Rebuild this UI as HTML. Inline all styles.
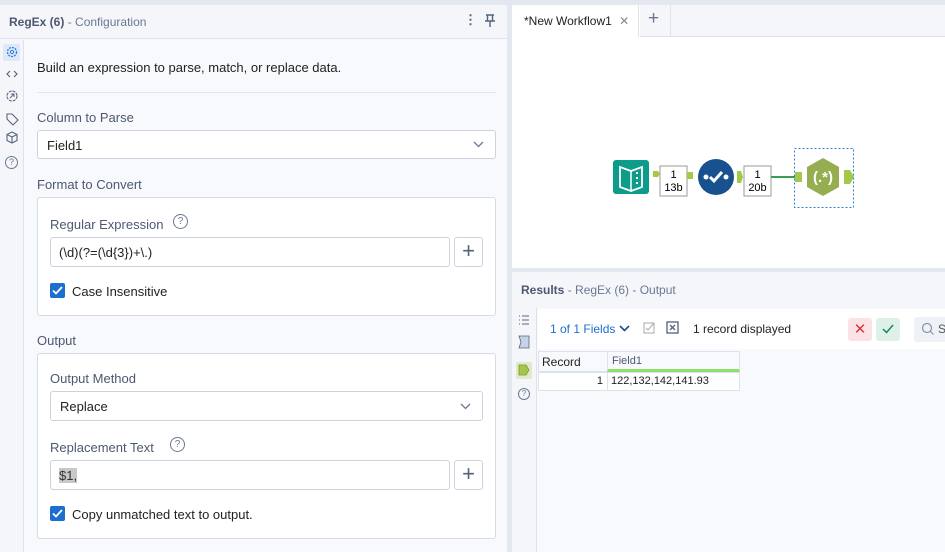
<!DOCTYPE html>
<html><head><meta charset="utf-8"><style>
*{box-sizing:border-box;margin:0;padding:0}
body{width:945px;height:552px;overflow:hidden;background:#e3e8f0;font-family:"Liberation Sans",sans-serif;position:relative;color:#333}
.a{position:absolute}
.lbl{font-size:13px;color:#4d5870}
.inp{background:#fff;border:1px solid #cdd3de;border-radius:3px;font-size:13px;color:#222}
.chk{width:15px;height:15px;background:#1c6fcf;border-radius:2px}
.help{width:15px;height:15px;border:1.3px solid #6b7894;border-radius:50%;font-size:10px;color:#6b7894;text-align:center;line-height:13px}
</style></head><body>
<div class="a" style="left:0;top:5px;width:507px;height:547px;background:#f7f9fd"></div>
<div class="a" style="left:0;top:5px;width:507px;height:34px;background:#f4f6fa;border-bottom:1px solid #dde3ec"></div>
<div class="a" style="left:9px;top:15px;font-size:12px;color:#4d5870"><b style="font-weight:600">RegEx (6)</b> <span style="color:#6b7894">- Configuration</span></div>
<div class="a" style="left:464px;top:12px;font-size:13px;color:#55607a;font-weight:bold">⋮</div>
<svg class="a" style="left:484px;top:14px" width="12" height="14" viewBox="0 0 12 14"><path d="M2 1h8M3.5 1v6M8.5 1v6M1 7h10M6 7v6" stroke="#55607a" stroke-width="1.4" fill="none"/></svg>
<div class="a" style="left:0;top:40px;width:24px;height:512px;background:#f4f6fa;border-right:1px solid #dde3ec"></div>
<div class="a" style="left:3px;top:44px;width:17px;height:17px;background:#dfe8f8;border-radius:2px"></div>
<svg class="a" style="left:5px;top:46px" width="14" height="100" viewBox="0 0 14 100">
<circle cx="7" cy="6" r="4.5" stroke="#2f7be0" stroke-width="1.3" fill="none" stroke-dasharray="2 1"/><circle cx="7" cy="6" r="1.6" stroke="#2f7be0" fill="none"/>
<path d="M5 25l-3 3 3 3M9 25l3 3-3 3" stroke="#5a6580" stroke-width="1.2" fill="none"/>
<circle cx="7" cy="50" r="5" stroke="#5a6580" stroke-width="1.1" fill="none" stroke-dasharray="3 1"/><path d="M5 52l4-4M6 48h3v3" stroke="#5a6580" fill="none"/>
<path d="M2 68v5l6 6 5-5-6-6z" stroke="#5a6580" stroke-width="1.1" fill="none"/>
<path d="M7 86l5 2.5v6L7 97l-5-2.5v-6z M2 88.5l5 2.5 5-2.5M7 91v6" stroke="#5a6580" stroke-width="1.1" fill="none"/>
</svg>
<div class="a help" style="left:5px;top:156px;width:13px;height:13px;font-size:9px;line-height:11px">?</div>
<div class="a" style="left:37px;top:60px;font-size:13px;color:#222">Build an expression to parse, match, or replace data.</div>
<div class="a" style="left:37px;top:92px;width:459px;height:1px;background:#e2e6ee"></div>
<div class="a lbl" style="left:37px;top:110px">Column to Parse</div>
<div class="a inp" style="left:37px;top:130px;width:459px;height:29px;padding:7px 9px">Field1</div>
<svg class="a" style="left:473px;top:141px" width="11" height="7"><path d="M1 1l4.5 4.5L10 1" stroke="#6b7894" stroke-width="1.3" fill="none"/></svg>
<div class="a lbl" style="left:37px;top:177px">Format to Convert</div>
<div class="a" style="left:37px;top:197px;width:459px;height:119px;background:#fff;border:1px solid #d6dce6;border-radius:3px"></div>
<div class="a lbl" style="left:50px;top:217px">Regular Expression</div>
<div class="a help" style="left:173px;top:214px">?</div>
<div class="a inp" style="left:50px;top:237px;width:400px;height:30px;padding:7px 8px">(\d)(?=(\d{3})+\.)</div>
<div class="a inp" style="left:454px;top:237px;width:29px;height:30px;text-align:center;font-size:22px;line-height:26px;color:#55607a">+</div>
<div class="a chk" style="left:50px;top:283px"></div>
<svg class="a" style="left:52px;top:286px" width="11" height="9"><path d="M1 4.5l3 3L10 1" stroke="#fff" stroke-width="1.8" fill="none"/></svg>
<div class="a" style="left:72px;top:284px;font-size:13px;color:#222">Case Insensitive</div>
<div class="a lbl" style="left:37px;top:333px">Output</div>
<div class="a" style="left:37px;top:353px;width:459px;height:186px;background:#fff;border:1px solid #d6dce6;border-radius:3px"></div>
<div class="a lbl" style="left:50px;top:371px">Output Method</div>
<div class="a inp" style="left:50px;top:391px;width:433px;height:30px;padding:7px 9px">Replace</div>
<svg class="a" style="left:460px;top:403px" width="11" height="7"><path d="M1 1l4.5 4.5L10 1" stroke="#6b7894" stroke-width="1.3" fill="none"/></svg>
<div class="a lbl" style="left:50px;top:440px">Replacement Text</div>
<div class="a help" style="left:170px;top:437px">?</div>
<div class="a inp" style="left:50px;top:460px;width:400px;height:30px;padding:7px 8px"><span style="background:#c8c8c8;color:#333">$1,</span></div>
<div class="a inp" style="left:454px;top:460px;width:29px;height:30px;text-align:center;font-size:22px;line-height:26px;color:#55607a">+</div>
<div class="a chk" style="left:50px;top:506px"></div>
<svg class="a" style="left:52px;top:509px" width="11" height="9"><path d="M1 4.5l3 3L10 1" stroke="#fff" stroke-width="1.8" fill="none"/></svg>
<div class="a" style="left:72px;top:507px;font-size:13px;color:#222">Copy unmatched text to output.</div>

<div class="a" style="left:512px;top:5px;width:433px;height:263px;background:#fff"></div>
<div class="a" style="left:640px;top:5px;width:305px;height:32px;background:#f4f6fa;border-bottom:1px solid #dde3ec"></div>
<div class="a" style="left:638px;top:5px;width:33px;height:32px;border-right:1px solid #dde3ec;border-left:1px solid #dde3ec"></div>
<div class="a" style="left:524px;top:14px;font-size:12px;color:#222">*New Workflow1 <span style="color:#888;margin-left:4px">✕</span></div>
<div class="a" style="left:648px;top:8px;font-size:19px;color:#6b7894">+</div>
<svg class="a" style="left:610px;top:148px" width="250" height="60" viewBox="0 0 250 60">
<rect x="3" y="12" width="36" height="34" rx="3" fill="#0e9c8a"/>
<path d="M10 19v20l11 4 11-4V19l-11 4z" stroke="#fff" stroke-width="1.8" fill="none"/><path d="M21 23v20" stroke="#fff" stroke-width="1.5"/><path d="M27 24v2M27 29v2M27 34v2" stroke="#fff" stroke-width="2"/>
<path d="M43 23h5l2 3-2 3h-5z" fill="#a5c84a"/>
<rect x="50" y="18" width="27" height="30" fill="#fff" stroke="#999"/>
<text x="63.5" y="30" font-size="11" text-anchor="middle" font-family="Liberation Sans">1</text><text x="63.5" y="43" font-size="11" text-anchor="middle" font-family="Liberation Sans">13b</text>
<rect x="77" y="24" width="6" height="7" fill="#a5c84a"/>
<circle cx="106" cy="29" r="18" fill="#17518f"/>
<circle cx="96" cy="29" r="2.5" fill="#fff"/><circle cx="116" cy="29" r="2.5" fill="#fff"/><path d="M100 29l4 4 8-9" stroke="#fff" stroke-width="3" fill="none"/>
<path d="M127 23h4l2 6-2 6h-4z" fill="#a5c84a"/>
<rect x="134" y="18" width="27" height="30" fill="#fff" stroke="#999"/>
<text x="147.5" y="30" font-size="11" text-anchor="middle" font-family="Liberation Sans">1</text><text x="147.5" y="43" font-size="11" text-anchor="middle" font-family="Liberation Sans">20b</text>
<path d="M161 29h25" stroke="#3a9d55" stroke-width="2"/>
<rect x="184.5" y="0.5" width="59" height="59" fill="none" stroke="#2a7fd4" stroke-dasharray="2 2"/>
<rect x="185" y="24" width="7" height="10" fill="#a5c84a"/>
<path d="M213 10l16 9v20l-16 9-16-9V19z" fill="#96ad50"/>
<text x="213" y="34" font-size="15" font-weight="bold" fill="#fff" text-anchor="middle" font-family="Liberation Sans">(.*)</text>
<path d="M234 22h6l4 7-4 7h-6z" fill="#a5c84a"/>
</svg>

<div class="a" style="left:512px;top:272px;width:433px;height:36px;background:#f4f6fa"></div>
<div class="a" style="left:521px;top:283px;font-size:12px;color:#6b7894"><b style="color:#4d5870;font-weight:600">Results</b> - RegEx (6) - Output</div>
<div class="a" style="left:512px;top:308px;width:25px;height:244px;background:#f4f6fa;border-right:1px solid #dde3ec"></div>
<div class="a" style="left:537px;top:308px;width:408px;height:244px;background:#f7f9fd"></div>
<div class="a" style="left:538px;top:309px;width:407px;height:40px;background:#fff"></div>
<svg class="a" style="left:516px;top:314px" width="16" height="90" viewBox="0 0 16 90">
<path d="M3 2h1M6 2h7M3 6h1M6 6h7M3 10h1M6 10h7" stroke="#5a6580" stroke-width="1"/>
<path d="M3 22h10v12H3l2-6z" fill="#c8d2e6" stroke="#5a6580" stroke-width=".8"/>
<rect x="0" y="48" width="16" height="17" rx="2" fill="#dfe9cc"/>
<path d="M3 51h7l3 5-3 5H3z" fill="#a5c84a" stroke="#7a9a30" stroke-width=".8"/>
</svg>
<div class="a help" style="left:518px;top:388px;width:12px;height:12px;font-size:8px;line-height:10px">?</div>
<div class="a" style="left:550px;top:322px;font-size:12px;color:#1c6fcf">1 of 1 Fields</div>
<svg class="a" style="left:619px;top:325px" width="11" height="7"><path d="M1 1l4.5 4.5L10 1" stroke="#1c4f8f" stroke-width="1.6" fill="none"/></svg>
<svg class="a" style="left:643px;top:321px" width="14" height="14"><rect x="1" y="2" width="10" height="10" fill="none" stroke="#aaa"/><path d="M3 7l2 2 6-7" stroke="#aaa" fill="none"/></svg>
<svg class="a" style="left:666px;top:321px" width="14" height="14"><rect x="1" y="1" width="11" height="11" fill="none" stroke="#55607a" stroke-width="1.3"/><path d="M4 4l5 5M9 4l-5 5" stroke="#55607a" stroke-width="1.3"/></svg>
<div class="a" style="left:693px;top:322px;font-size:12px;color:#222">1 record displayed</div>
<div class="a" style="left:848px;top:318px;width:24px;height:23px;background:#fbe3e5;border-radius:3px;color:#d9363e;text-align:center;font-size:15px;line-height:23px">✕</div>
<div class="a" style="left:876px;top:318px;width:24px;height:23px;background:#ddf1e8;border-radius:3px"></div>
<svg class="a" style="left:882px;top:324px" width="12" height="10"><path d="M1 5l3.5 3.5L11 1" stroke="#148a5a" stroke-width="1.5" fill="none"/></svg>
<div class="a" style="left:914px;top:317px;width:40px;height:25px;background:#eef1f6;border-radius:3px"></div>
<svg class="a" style="left:921px;top:322px" width="14" height="14"><circle cx="6" cy="6" r="4.5" stroke="#8893a8" fill="none" stroke-width="1.2"/><path d="M9.5 9.5l3 3" stroke="#8893a8" stroke-width="1.2"/></svg>
<div class="a" style="left:938px;top:322px;font-size:12px;color:#555">S</div>
<div class="a" style="left:538px;top:351px;width:70px;height:21px;background:#f7f9fd;border:1px solid #dde3ec;font-size:12px;padding:3px 3px;color:#222">Record</div>
<div class="a" style="left:607px;top:351px;width:133px;height:21px;background:#f7f9fd;border:1px solid #dde3ec;border-bottom:3px solid #8ee06a;font-size:11px;padding:3px 4px;color:#4d5870">Field1</div>
<div class="a" style="left:538px;top:372px;width:70px;height:19px;background:#fff;border:1px solid #dde3ec;font-size:11px;text-align:right;padding:2px 4px;color:#222">1</div>
<div class="a" style="left:607px;top:372px;width:133px;height:19px;background:#fff;border:1px solid #dde3ec;font-size:11px;padding:2px 3px;color:#222">122,132,142,141.93</div>
</body></html>
